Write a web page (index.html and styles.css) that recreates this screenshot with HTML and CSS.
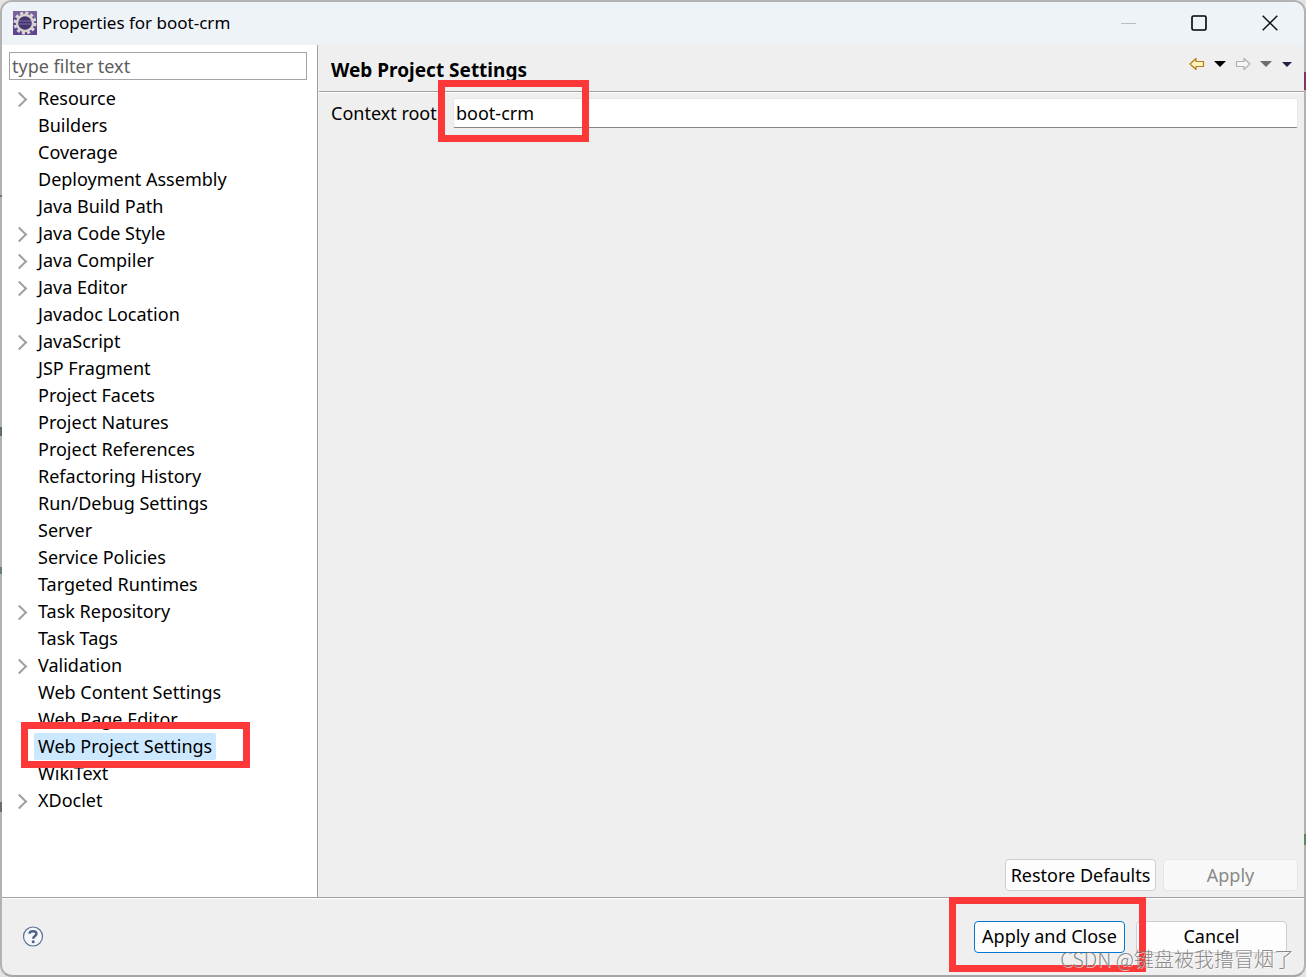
FILE: index.html
```html
<!DOCTYPE html>
<html lang="en">
<head>
  <meta charset="UTF-8" />
  <meta name="viewport" content="width=device-width, initial-scale=1.0" />
  <title>Properties for boot-crm</title>
  <link rel="stylesheet" href="styles.css">
</head>
<body>
  <div class="dialog">
    <!-- Title bar -->
    <header class="titlebar">
      <svg class="app-icon" viewBox="0 0 24 24" aria-hidden="true">
        <rect width="24" height="24" fill="#5f4590" />
        <path d="M0 0h24v7H0z" fill="#78639c" />
        <circle cx="12" cy="12" r="10" fill="none" stroke="#dcd8d4" stroke-width="3" stroke-dasharray="3 2.236" />
        <circle cx="12" cy="12" r="8" fill="#43366a" stroke="#d6d2d0" stroke-width="2.5" />
        <path d="M6 10h12M5 13h14" stroke="#6a5a9a" stroke-width="1.5" />
      </svg>
      <h1>Properties for boot-crm</h1>
      <div class="window-controls">
        <button type="button" aria-label="Minimize" disabled>
          <svg width="16" height="16" viewBox="0 0 16 16"><path d="M1 8.500h15" stroke="#b9bec3" /></svg>
        </button>
        <button type="button" aria-label="Maximize">
          <svg width="16" height="16" viewBox="0 0 16 16"><rect x="1" y="1" width="14" height="14" rx="1.5" fill="none" stroke="#000" stroke-width="1.6" /></svg>
        </button>
        <button type="button" aria-label="Close">
          <svg width="16" height="16" viewBox="0 0 16 16"><path d="M.7.7l14.6 14.6M15.3.7L.7 15.3" stroke="#111" stroke-width="1.5" /></svg>
        </button>
      </div>
    </header>

    <div class="content">
      <!-- Page tree -->
      <aside class="sidebar">
        <input class="filter" type="text" placeholder="type filter text" aria-label="Filter">
        <ul class="tree">
          <li><button class="expander" type="button" aria-label="Expand Resource"></button><a href="#">Resource</a></li>
          <li><a href="#">Builders</a></li>
          <li><a href="#">Coverage</a></li>
          <li><a href="#">Deployment Assembly</a></li>
          <li><a href="#">Java Build Path</a></li>
          <li><button class="expander" type="button" aria-label="Expand Java Code Style"></button><a href="#">Java Code Style</a></li>
          <li><button class="expander" type="button" aria-label="Expand Java Compiler"></button><a href="#">Java Compiler</a></li>
          <li><button class="expander" type="button" aria-label="Expand Java Editor"></button><a href="#">Java Editor</a></li>
          <li><a href="#">Javadoc Location</a></li>
          <li><button class="expander" type="button" aria-label="Expand JavaScript"></button><a href="#">JavaScript</a></li>
          <li><a href="#">JSP Fragment</a></li>
          <li><a href="#">Project Facets</a></li>
          <li><a href="#">Project Natures</a></li>
          <li><a href="#">Project References</a></li>
          <li><a href="#">Refactoring History</a></li>
          <li><a href="#">Run/Debug Settings</a></li>
          <li><a href="#">Server</a></li>
          <li><a href="#">Service Policies</a></li>
          <li><a href="#">Targeted Runtimes</a></li>
          <li><button class="expander" type="button" aria-label="Expand Task Repository"></button><a href="#">Task Repository</a></li>
          <li><a href="#">Task Tags</a></li>
          <li><button class="expander" type="button" aria-label="Expand Validation"></button><a href="#">Validation</a></li>
          <li><a href="#">Web Content Settings</a></li>
          <li><a href="#">Web Page Editor</a></li>
          <li><a class="selected" href="#">Web Project Settings</a><span class="mark mark-tree"></span></li>
          <li><a href="#">WikiText</a></li>
          <li><button class="expander" type="button" aria-label="Expand XDoclet"></button><a href="#">XDoclet</a></li>
        </ul>
      </aside>

      <!-- Settings page -->
      <main class="page">
        <div class="page-header">
          <h2>Web Project Settings</h2>
          <div class="history">
            <button type="button" aria-label="Back">
              <svg width="16" height="14" viewBox="0 0 16 14"><path d="M1 7l6-5.500v3h7.500v5H7v3z" fill="#fff3c0" stroke="#b97a10" stroke-width="1.2" stroke-linejoin="round" /></svg>
            </button>
            <button type="button" aria-label="Back history">
              <svg width="12" height="14" viewBox="0 0 12 14"><path d="M0 4h12l-6 6z" fill="#000" /></svg>
            </button>
            <button type="button" aria-label="Forward" disabled>
              <svg width="16" height="14" viewBox="0 0 16 14"><path d="M15 7L9 1.500v3H1.500v5H9v3z" fill="#f6f6f6" stroke="#b0b0b0" stroke-width="1.2" stroke-linejoin="round" /></svg>
            </button>
            <button type="button" aria-label="Forward history" disabled>
              <svg width="12" height="14" viewBox="0 0 12 14"><path d="M0 4h12l-6 6z" fill="#6d6d72" /></svg>
            </button>
            <button type="button" aria-label="View menu">
              <svg width="12" height="14" viewBox="0 0 12 14"><path d="M1 5h10l-5 5z" fill="#2a1c45" /></svg>
            </button>
          </div>
        </div>
        <div class="field">
          <label for="context-root">Context root:</label>
          <div class="field-box">
            <input id="context-root" type="text" value="boot-crm">
            <span class="mark mark-field"></span>
          </div>
        </div>
        <div class="page-actions">
          <button class="btn" type="button">Restore Defaults</button>
          <button class="btn btn-apply" type="button" disabled>Apply</button>
        </div>
      </main>
    </div>

    <!-- Bottom bar -->
    <footer class="footer">
      <button class="help" type="button" aria-label="Help">
        <svg width="22" height="22" viewBox="0 0 22 22">
          <circle cx="11" cy="10.500" r="9.500" fill="#f6f7f9" stroke="#5c7196" stroke-width="1.200" />
          <path d="M7.500 7.800C7.500 4.300 14.500 4.300 14.500 7.800C14.500 10.100 11.200 10 11.200 12.700" fill="none" stroke="#4a6088" stroke-width="2.400" />
          <circle cx="11.200" cy="15.700" r="1.500" fill="#4a6088" />
        </svg>
      </button>
      <div class="footer-actions">
        <div class="default-action">
          <button class="btn btn-default" type="button">Apply and Close</button>
          <span class="mark mark-apply"></span>
        </div>
        <button class="btn" type="button">Cancel</button>
      </div>
    </footer>
    <span class="watermark">CSDN @键盘被我撸冒烟了</span>
  </div>
</body>
</html>
```

FILE: styles.css
```css
/* Reset and base styles */
* {
  margin: 0;
  padding: 0;
  box-sizing: border-box;
}
html, body {
  height: 100%;
}
body {
  background: #e4e4e4;
  color: #000;
  font-family: "Noto Sans", "Noto Sans CJK SC", sans-serif;
  font-size: 18px;
  line-height: 27px;
}
/* Windows showing through the dialog's edges */
body::before,
body::after {
  content: "";
  position: fixed;
  top: 0;
  bottom: 0;
  z-index: 3;
  width: 2px;
  background-repeat: no-repeat;
  pointer-events: none;
}
body::before {
  left: 0;
  background-image:
    linear-gradient(#5f7f74, #5f7f74),
    linear-gradient(#5c6f68, #5c6f68),
    linear-gradient(#64807a, #64807a),
    linear-gradient(#6c6c6c, #6c6c6c);
  background-size: 2px 2px, 2px 9px, 2px 7px, 2px 10px;
  background-position: 0 195px, 0 427px, 0 567px, 0 802px;
}
body::after {
  right: 0;
  background-image:
    linear-gradient(#7d3566, #7d3566),
    linear-gradient(#5d8560, #5d8560);
  background-size: 2px 18px, 2px 11px;
  background-position: 0 72px, 0 834px;
}
button, input {
  font: inherit;
  color: inherit;
}
button {
  border: none;
  background: none;
}
svg {
  display: block;
}
.dialog {
  position: relative;
  display: flex;
  flex-direction: column;
  height: 100vh;
  border: 2px solid #b2b2b2;
  border-bottom-color: #a6a6a6;
  border-radius: 12px;
  background: #efefef;
  overflow: hidden;
}
/* Title bar */
.titlebar {
  display: flex;
  align-items: center;
  height: 43px;
  padding: 0 26px 2px 11px;
  background: #eef3f8;
}
.app-icon {
  width: 24px;
  height: 24px;
  margin-right: 5px;
}
.titlebar h1 {
  font-size: 17px;
  font-weight: normal;
}
.window-controls {
  display: flex;
  gap: 55px;
  margin-left: auto;
}
/* Tree */
.content {
  display: flex;
  flex: 1;
  min-height: 0;
}
.sidebar {
  width: 316px;
  padding: 7px 10px 0 7px;
  border-right: 1px solid #a0a0a0;
  background: #fff;
}
.filter {
  display: block;
  width: 100%;
  height: 28px;
  padding: 0 2px;
  border: 1px solid #a3a3aa;
  background: #fff;
}
.filter::placeholder {
  color: #5e5e5e;
  opacity: 1;
}
.tree {
  margin-top: 5px;
  list-style: none;
}
.tree li {
  position: relative;
  display: flex;
  height: 27px;
  padding-left: 25px;
}
.tree a {
  padding: 0 4px;
  border-radius: 2px;
  color: #000;
  text-decoration: none;
  white-space: nowrap;
}
.tree .selected {
  background: #cce8ff;
}
.expander {
  display: flex;
  align-items: center;
  width: 20px;
  margin-left: -20px;
  padding-top: 2px;
}
.expander::before {
  content: "";
  width: 9px;
  height: 9px;
  border-top: 2px solid #a0a0a0;
  border-right: 2px solid #a0a0a0;
  transform: rotate(45deg);
}
/* Settings page */
.page {
  display: flex;
  flex: 1;
  flex-direction: column;
  margin-left: 1px;
}
.page-header {
  display: flex;
  align-items: flex-start;
  justify-content: space-between;
  height: 48px;
  padding: 12px 11px 0 12px;
  border-bottom: 1px solid #fff;
  box-shadow: inset 0 -1px #a0a0a0;
}
.page-header h2 {
  font-size: 19px;
}
.history {
  display: flex;
  gap: 9px;
}
.field {
  display: flex;
  gap: 8px;
  padding: 5px 6px 0 12px;
}
.field label {
  width: 114px;
  line-height: 30px;
}
.field-box {
  position: relative;
  flex: 1;
}
.field-box input {
  display: block;
  width: 100%;
  height: 30px;
  padding: 0 2px;
  border: 1px solid #e6e6e6;
  border-bottom-color: #858585;
  border-radius: 2px;
  background: #fff;
}
.page-actions {
  display: flex;
  justify-content: flex-end;
  gap: 7px;
  margin-top: auto;
  padding: 0 6px 6px 0;
}
.btn {
  width: 151px;
  height: 32px;
  border: 1px solid #cfcfcf;
  border-radius: 4px;
  background: #fdfdfd;
  white-space: nowrap;
}
.btn-apply {
  width: 135px;
}
.btn:disabled {
  border-color: #e6e6e6;
  background: #f8f8f8;
  color: #888;
}
.btn-default {
  border-color: #0078d4;
}
/* Bottom bar */
.footer {
  display: flex;
  align-items: center;
  justify-content: space-between;
  height: 78px;
  padding: 0 17px 0 20px;
  border-top: 1px solid #a0a0a0;
  box-shadow: inset 0 1px #fff;
}
.footer-actions {
  display: flex;
  gap: 11px;
}
.default-action {
  position: relative;
}
/* Red highlight frames */
.mark {
  position: absolute;
  z-index: 1;
  border: 7px solid #fc3838;
  pointer-events: none;
}
.mark-tree {
  top: -11px;
  left: 12px;
  width: 229px;
  height: 46px;
}
.mark-field {
  top: -18px;
  left: -15px;
  width: 151px;
  height: 62px;
}
.mark-apply {
  top: -24px;
  left: -25px;
  width: 197px;
  height: 75px;
}
.watermark {
  position: absolute;
  right: 10px;
  bottom: 3px;
  z-index: 2;
  color: rgba(110, 110, 110, 0.8);
  font-family: "Noto Sans CJK SC", sans-serif;
  font-size: 20px;
  font-weight: 300;
  text-shadow: 1px 1px rgba(255, 255, 255, 0.6);
  white-space: nowrap;
}
```
